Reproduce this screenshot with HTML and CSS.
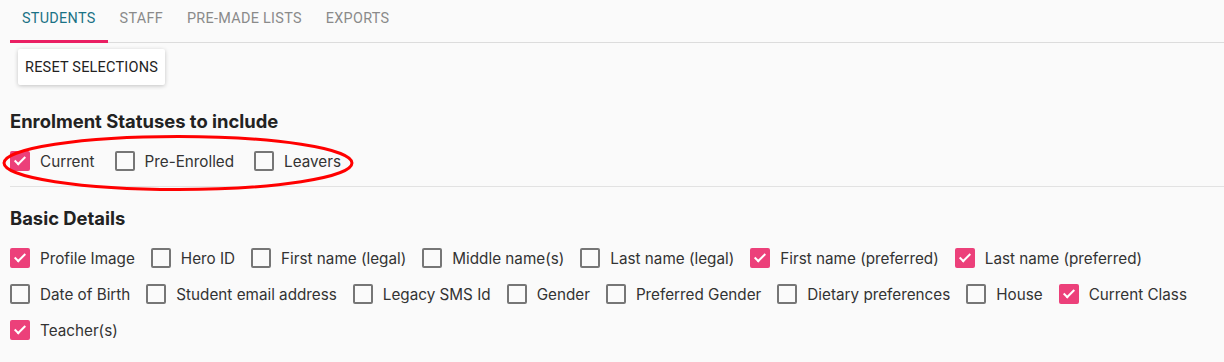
FILE: index.html
```html
<!DOCTYPE html>
<html>
<head>
<meta charset="utf-8">
<link rel="stylesheet" href="styles.css">
</head>
<body>
<div class="page">
  <nav class="tabs">
    <div class="tab active">Students</div>
    <div class="tab">Staff</div>
    <div class="tab">Pre-made lists</div>
    <div class="tab">Exports</div>
  </nav>
  <div class="actions">
    <button class="btn">RESET SELECTIONS</button>
  </div>
  <section class="group">
    <h2 class="heading">Enrolment Statuses to include</h2>
    <div class="options highlighted">
      <label class="opt"><span class="cb on"></span><span>Current</span></label>
      <label class="opt"><span class="cb"></span><span>Pre-Enrolled</span></label>
      <label class="opt"><span class="cb"></span><span>Leavers</span></label>
      <svg class="ring" viewBox="0 0 354 58" width="354" height="58"><ellipse cx="177" cy="29" rx="174" ry="26.5" fill="none" stroke="#ff0000" stroke-width="3"/></svg>
    </div>
  </section>
  <section class="group bordered">
    <h2 class="heading">Basic Details</h2>
    <div class="options">
      <label class="opt"><span class="cb on"></span><span>Profile Image</span></label>
      <label class="opt"><span class="cb"></span><span>Hero ID</span></label>
      <label class="opt"><span class="cb"></span><span>First name (legal)</span></label>
      <label class="opt"><span class="cb"></span><span>Middle name(s)</span></label>
      <label class="opt"><span class="cb"></span><span>Last name (legal)</span></label>
      <label class="opt"><span class="cb on"></span><span>First name (preferred)</span></label>
      <label class="opt"><span class="cb on"></span><span>Last name (preferred)</span></label>
      <label class="opt"><span class="cb"></span><span>Date of Birth</span></label>
      <label class="opt"><span class="cb"></span><span>Student email address</span></label>
      <label class="opt"><span class="cb"></span><span>Legacy SMS Id</span></label>
      <label class="opt"><span class="cb"></span><span>Gender</span></label>
      <label class="opt"><span class="cb"></span><span>Preferred Gender</span></label>
      <label class="opt"><span class="cb"></span><span>Dietary preferences</span></label>
      <label class="opt"><span class="cb"></span><span>House</span></label>
      <label class="opt"><span class="cb on"></span><span>Current Class</span></label>
      <label class="opt"><span class="cb on"></span><span>Teacher(s)</span></label>
    </div>
  </section>
</div>
</body>
</html>
```
FILE: styles.css
```css
html, body {
  margin: 0;
  padding: 0;
  background: #fafafa;
}
.page {
  padding: 0 0 0 10px;
  font-family: Inter, "Liberation Sans", sans-serif;
  color: #333;
}
.tabs {
  display: flex;
  border-bottom: 1px solid #dcdcdc;
  height: 43px;
  box-sizing: border-box;
}
.tab {
  font-family: Roboto, "Liberation Sans", sans-serif;
  font-size: 14.4px;
  letter-spacing: 0.3px;
  text-transform: uppercase;
  color: #8a8a8a;
  padding: 0 12px;
  height: 42px;
  line-height: 37px;
  box-sizing: border-box;
}
.tab.active {
  color: #1a7285;
  border-bottom: 3px solid #ea1f63;
  height: 43px;
}
.actions {
  padding: 6px 0 0 8px;
  height: 43px;
  box-sizing: border-box;
}
.btn {
  font-family: Roboto, "Liberation Sans", sans-serif;
  font-size: 14.5px;
  letter-spacing: 0.2px;
  color: #222;
  background: #fff;
  border: none;
  border-radius: 2px;
  height: 36px;
  padding: 0 7px;
  box-shadow: 0 1px 4px rgba(0,0,0,0.22);
}
.group {
  padding-top: 24px;
}
.group.bordered {
  border-top: 1px solid #e2e2e2;
  padding-top: 20px;
}
.heading {
  margin: 0;
  font-size: 18.4px;
  font-weight: 700;
  color: #222;
  line-height: 22px;
}
.options {
  display: flex;
  flex-wrap: wrap;
  column-gap: 16px;
  padding: 11px 0 5px;
  position: relative;
  width: 1204px;
}
.options.highlighted {
  column-gap: 20px;
  padding: 11px 0 7px;
}
.opt {
  display: flex;
  align-items: center;
  height: 36px;
  font-size: 15.25px;
  color: #333;
  gap: 10px;
}
.cb {
  width: 16px;
  height: 16px;
  border: 2px solid #767676;
  border-radius: 2px;
  box-sizing: content-box;
  display: inline-block;
  position: relative;
}
.cb.on {
  background: #ec407a;
  border-color: #ec407a;
}
.cb.on::after {
  content: "";
  position: absolute;
  left: 5px;
  top: 1px;
  width: 4px;
  height: 9px;
  border-right: 2px solid #fff;
  border-bottom: 2px solid #fff;
  transform: rotate(45deg);
}
.ring {
  position: absolute;
  left: -9px;
  top: 2px;
}
```
